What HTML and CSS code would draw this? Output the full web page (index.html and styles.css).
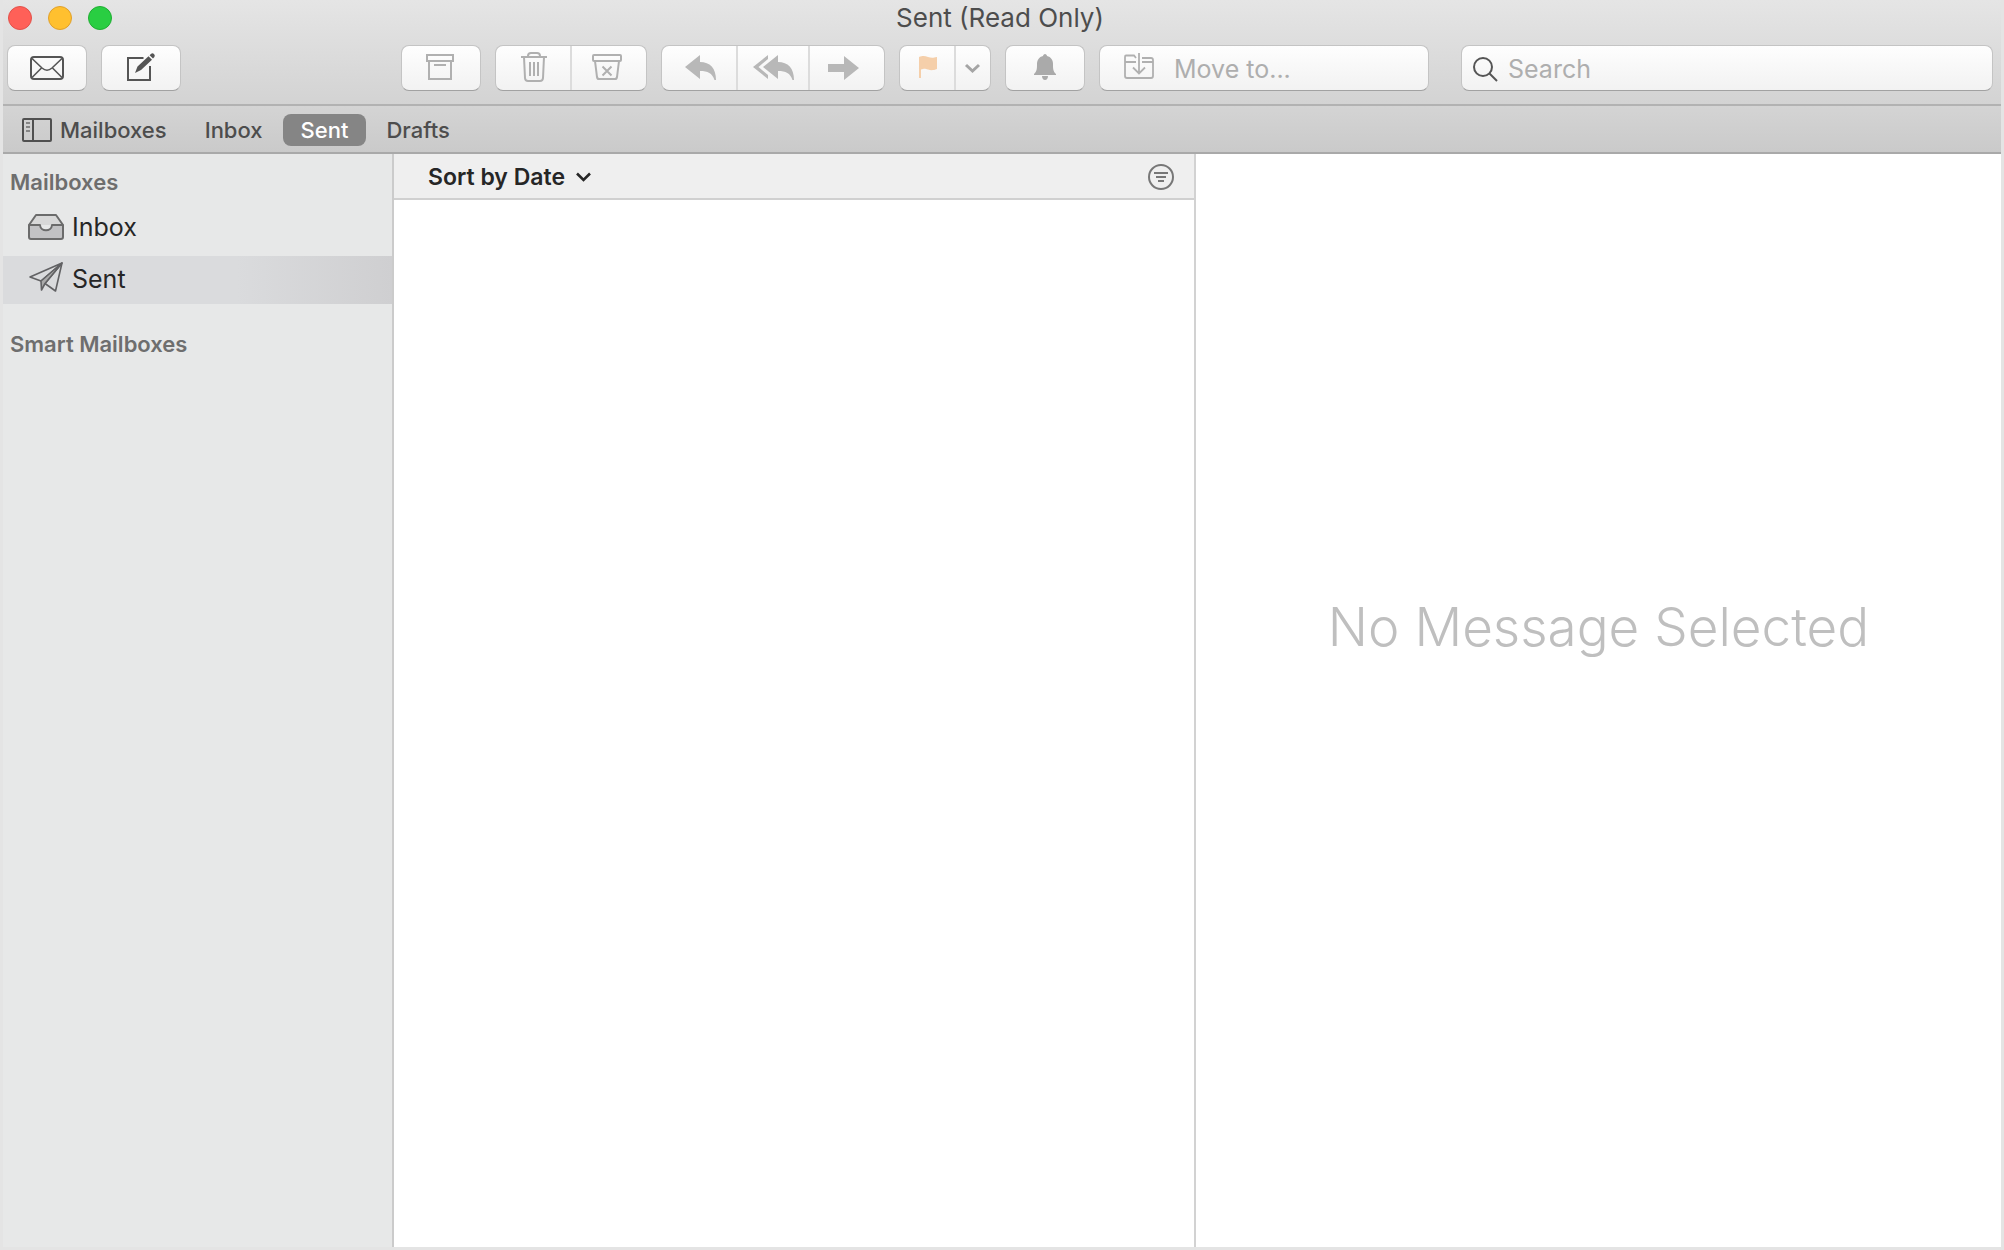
FILE: index.html
```html
<!DOCTYPE html>
<html lang="en">
<head>
<meta charset="utf-8">
<meta name="viewport" content="width=device-width, initial-scale=1">
<title>Sent (Read Only)</title>
<link rel="stylesheet" href="styles.css">
</head>
<body>
<div class="window">
  <header class="chrome">
    <div class="titlebar">
      <div class="lights">
        <button class="light light-close" aria-label="Close"></button>
        <button class="light light-minimize" aria-label="Minimize"></button>
        <button class="light light-zoom" aria-label="Zoom"></button>
      </div>
      <h1 class="title">Sent (Read Only)</h1>
    </div>
    <div class="toolbar">
      <div class="tools tools-left">
        <button class="control tool" aria-label="Get mail">
          <svg width="34" height="24" viewBox="0 0 34 24" fill="none" stroke="#555" stroke-width="2"><rect x="1" y="1" width="32" height="22" rx="3"/><path stroke-width="1.6" d="M2 2.500L12 12Q17 16.500 22 12L32 2.500M2 21.500L11.500 12M32 21.500L22.500 12"/></svg>
        </button>
        <button class="control tool" aria-label="New message">
          <svg width="28" height="28" viewBox="0 1 28 28" fill="none" stroke="#555" stroke-width="2"><path d="M16.500 5H1V27H23V13"/><path fill="#555" stroke="none" d="M8 20L10.500 13.500L21.500 3.200L25 6.700L14 17ZM22.600 2.200L24.200.7Q25.600-.3 27 1.100Q28.400 2.600 27.400 4L26 5.600Z"/></svg>
        </button>
      </div>
      <div class="tools">
        <button class="control tool" aria-label="Archive" disabled>
          <svg width="28" height="26" viewBox="1 1 28 26" fill="none" stroke="#b0b0b0" stroke-width="2"><path d="M1 1H27V7H1ZM3 7V25H25V7M8 11H20"/></svg>
        </button>
        <div class="control group">
          <button class="segment" aria-label="Delete" disabled>
            <svg width="26" height="30" viewBox="-1 1 26 30" fill="none" stroke="#b0b0b0" stroke-width="2"><path d="M0 5H26M7 5V4Q7 1 10 1H16Q19 1 19 4V5M3 5L4 26Q4.200 29 7 29H19Q21.800 29 22 26L23 5M9 10V24M13 10V24M17 10V24"/></svg>
          </button>
          <button class="segment" aria-label="Junk" disabled>
            <svg width="30" height="26" viewBox="2 1 30 26" fill="none" stroke="#b0b0b0" stroke-width="2"><rect x="1" y="1" width="28" height="6" rx="1"/><path d="M3 7L5 23Q5.300 25 7 25H23Q24.700 25 25 23L27 7M10.500 12.500L19.500 21.500M19.500 12.500L10.500 21.500"/></svg>
          </button>
        </div>
        <div class="control group group-reply">
          <button class="segment" aria-label="Reply" disabled>
            <svg width="31" height="25" viewBox="-1 1 31 25" fill="#b8b8b8"><path d="M0 12L15 0V7C25 7 31 13 31 25H29.500C27 18 23 16 15 16V24Z"/></svg>
          </button>
          <button class="segment segment-middle" aria-label="Reply all" disabled>
            <svg width="41" height="25" viewBox="0 1 41 25" fill="#b8b8b8"><path d="M10 12L25 0V7C35 7 41 13 41 25H39.500C37 18 33 16 25 16V24ZM0 12L15 0V4L5.500 12L15 20V24Z"/></svg>
          </button>
          <button class="segment" aria-label="Forward" disabled>
            <svg width="38" height="24" viewBox="0 0 38 24" fill="#b8b8b8"><path d="M0 8H16V0L31 12L16 24V16H0Z"/></svg>
          </button>
        </div>
        <div class="control group group-flag">
          <button class="segment" aria-label="Flag" disabled>
            <svg width="18" height="22" viewBox="-1 1 18 22" fill="#f5cfaa"><path d="M0 1C4-.5 6 0 9 1S14 2 18 1V13C14 14.500 12 14.500 9 13.500S5 12.500 2 13.500V22H0Z"/></svg>
          </button>
          <button class="segment segment-menu" aria-label="Flag colors" disabled>
            <svg width="15" height="9" viewBox="1 0 15 9" fill="none" stroke="#a5a5a5" stroke-width="3"><path d="M1 1L7.500 7L14 1"/></svg>
          </button>
        </div>
        <button class="control tool" aria-label="Mute" disabled>
          <svg width="22" height="26" viewBox="0 1 22 26" fill="#aaa"><path d="M11 0C12 0 13 1 13 2C17 3 19 6 19 10C19 15 19 17 22 20V21H0V20C3 17 3 15 3 10C3 6 5 3 9 2C9 1 10 0 11 0ZM8 22H14C14 24 13 26 11 26S8 24 8 22Z"/></svg>
        </button>
        <button class="control move" disabled>
          <svg width="30" height="26" viewBox="0 3 30 26" fill="none" stroke="#b0b0b0" stroke-width="1.800"><path d="M12 5L10 2.500H2Q1 2.500 1 4V23Q1 25 3 25H27Q29 25 29 23V7Q29 5 27 5H18M1 9H12M18 9H29M15 0V20M9 14.500L15 20.500L21 14.500"/></svg>
          Move to...
        </button>
      </div>
      <label class="control search">
        <svg width="25" height="25" viewBox="0 0 25 25" fill="none" stroke="#555" stroke-width="2"><circle cx="10" cy="10" r="9"/><path d="M16.500 16.500L24 24"/></svg>
        <input class="search-input" type="search" placeholder="Search" aria-label="Search">
      </label>
    </div>
  </header>

  <nav class="favorites" aria-label="Favorites">
    <button class="favorite favorite-toggle">
      <svg width="30" height="24" viewBox="0 0 30 24" fill="none" stroke="#505050" stroke-width="2"><rect x="1" y="1" width="28" height="22" rx="1"/><path d="M11 1V23"/><path stroke="#858585" d="M4 5H8M4 9H8M4 13H8"/></svg>
      Mailboxes
    </button>
    <a class="favorite" href="#inbox">Inbox</a>
    <a class="favorite favorite-active" href="#sent" aria-current="page">Sent</a>
    <a class="favorite" href="#drafts">Drafts</a>
  </nav>

  <main class="panes">
    <aside class="sidebar">
      <h2 class="section-title">Mailboxes</h2>
      <ul class="mailboxes">
        <li><a class="mailbox" href="#inbox">
          <svg width="36" height="26" viewBox="0 0 36 26" fill="#d8d8d8" stroke="#6b6b6b" stroke-width="2" stroke-linejoin="round"><path d="M1 11L8 1H28L35 11"/><path fill="#c2c2c4" d="M1 11H12C12.500 18 23.500 18 24 11H35V23Q35 25 33 25H3Q1 25 1 23Z"/></svg>
          Inbox</a></li>
        <li><a class="mailbox mailbox-active" href="#sent" aria-current="page">
          <svg width="36" height="30" viewBox="0 2 36 30" fill="none" stroke="#626264" stroke-width="1.600" stroke-linejoin="round"><path d="M34 1L2 15L13 19L34 1L27.500 29L17 21.500Z"/><path fill="#aaa" d="M13 19L34 1L17 21.500L13.500 28Z"/></svg>
          Sent</a></li>
      </ul>
      <h2 class="section-title">Smart Mailboxes</h2>
    </aside>
    <section class="messages" aria-label="Messages">
      <div class="sortbar">
        <button class="sort">Sort by Date
          <svg width="15" height="10" viewBox="0 0 15 10" fill="none" stroke="#262626" stroke-width="2.600"><path d="M1 1.500L7.500 8L14 1.500"/></svg>
        </button>
        <button class="filter" aria-label="Filter">
          <svg width="26" height="26" viewBox="0 0 26 26" fill="none" stroke="#777" stroke-width="2"><circle cx="13" cy="13" r="12"/><path d="M6 9H20M8 13H18M10 17H16"/></svg>
        </button>
      </div>
    </section>
    <section class="viewer" aria-label="Message">
      <p class="empty">No Message Selected</p>
    </section>
  </main>
</div>
</body>
</html>
```
FILE: styles.css
```css
* {
  box-sizing: border-box;
}

body {
  margin: 0;
  font-family: Inter, "Liberation Sans", sans-serif;
  font-size: 22px;
  color: #262626;
}

button,
input {
  margin: 0;
  padding: 0;
  border: 0;
  background: none;
  color: inherit;
  font: inherit;
}

a {
  color: inherit;
  text-decoration: none;
}

svg {
  display: block;
  flex: none;
  overflow: visible;
}

.window {
  display: flex;
  flex-direction: column;
  min-height: 100vh;
  border: 3px solid #e4e4e4;
  border-top: 0;
}

/* Title bar and toolbar */
.chrome {
  padding: 0 8px 13px 4px;
  border-bottom: 2px solid #b2b2b2;
  background: linear-gradient(#e5e5e5, #d3d3d3);
}

.titlebar {
  display: grid;
  grid-template-columns: 1fr auto 1fr;
  align-items: center;
  height: 36px;
  margin-bottom: 9px;
}

.lights {
  display: flex;
  gap: 16px;
  padding-left: 1px;
}

.light {
  width: 24px;
  height: 24px;
  border: 1px solid;
  border-radius: 50%;
}

.light-close {
  border-color: #e2514a;
  background: #ff6058;
}

.light-minimize {
  border-color: #e0a02b;
  background: #ffc02f;
}

.light-zoom {
  border-color: #1fae32;
  background: #29ce42;
}

.title {
  margin: 0;
  color: #4d4d4d;
  font-size: 26px;
  font-weight: 400;
  line-height: 32px;
}

.toolbar {
  display: flex;
}

.tools {
  display: flex;
  gap: 14px;
}

.tools-left {
  margin-right: 220px;
}

.control {
  display: flex;
  align-items: center;
  height: 46px;
  border: 1px solid #c4c4c4;
  border-bottom-color: #a2a2a2;
  border-radius: 8px;
  background: linear-gradient(#fefefe, #f2f2f2);
}

.tool {
  justify-content: center;
  width: 80px;
}

.group {
  width: 152px;
}

.group-reply {
  width: 224px;
}

.group-flag {
  width: 92px;
}

.segment {
  display: flex;
  flex: 1;
  align-items: center;
  justify-content: center;
  height: 100%;
}

.segment + .segment {
  border-left: 2px solid #dcdcdc;
}

.segment-middle {
  flex: 0 0 72px;
}

.segment-menu {
  flex: 0 0 36px;
}

.move {
  gap: 20px;
  width: 330px;
  padding: 2px 0 0 24px;
  color: #aeaeae;
  font-size: 25px;
}

.search {
  flex: 1;
  gap: 10px;
  min-width: 160px;
  margin-left: 32px;
  padding: 2px 11px 0;
}

.search-input {
  flex: 1;
  min-width: 0;
  height: 40px;
  outline: 0;
  font-size: 25px;
}

.search-input::placeholder {
  color: #aeaeae;
  opacity: 1;
}

/* Favorites bar */
.favorites {
  display: flex;
  align-items: center;
  height: 48px;
  padding: 2px 0 0 19px;
  border-bottom: 2px solid #a9a9a9;
  background: linear-gradient(#d4d4d4, #cacaca);
  color: #4d4d4d;
}

.favorite {
  display: flex;
  align-items: center;
  height: 32px;
  padding: 0 18px;
  border-radius: 8px;
  font-weight: 500;
}

.favorite-toggle {
  gap: 8px;
  margin-right: 2px;
  padding-left: 0;
}

.favorite-active {
  margin: 0 2px;
  background: #858585;
  color: #fff;
}

/* Panes */
.panes {
  display: grid;
  flex: 1;
  grid-template-columns: 391px minmax(0, 802fr) minmax(0, 805fr);
}

.sidebar {
  border-right: 2px solid #cbcbcb;
  background: #e7e8e8;
}

.section-title {
  margin: 0;
  padding: 14px 7px 8px;
  color: #6e6e6e;
  font-size: 22px;
  font-weight: 600;
  line-height: 28px;
}

.mailboxes {
  display: grid;
  gap: 4px;
  margin: 0 0 12px;
  padding: 0;
  list-style: none;
}

.mailbox {
  display: flex;
  gap: 8px;
  align-items: center;
  height: 48px;
  padding: 0 25px 2px;
  font-size: 25px;
}

.mailbox-active {
  background: linear-gradient(to right, #dadbdd 60%, #cfcfd1);
}

.messages {
  border-right: 2px solid #d2d2d2;
  background: #fff;
}

.sortbar {
  display: flex;
  align-items: center;
  justify-content: space-between;
  height: 46px;
  padding: 2px 20px 0 34px;
  border-bottom: 2px solid #d0d0d0;
  background: #efefef;
}

.sort {
  display: flex;
  gap: 11px;
  align-items: center;
  font-size: 23px;
  font-weight: 600;
}

.viewer {
  padding-top: 439px;
  background: #fff;
  text-align: center;
}

.empty {
  margin: 0;
  color: #bfbfbf;
  font-size: 53px;
  font-weight: 300;
  line-height: 68px;
}
```
